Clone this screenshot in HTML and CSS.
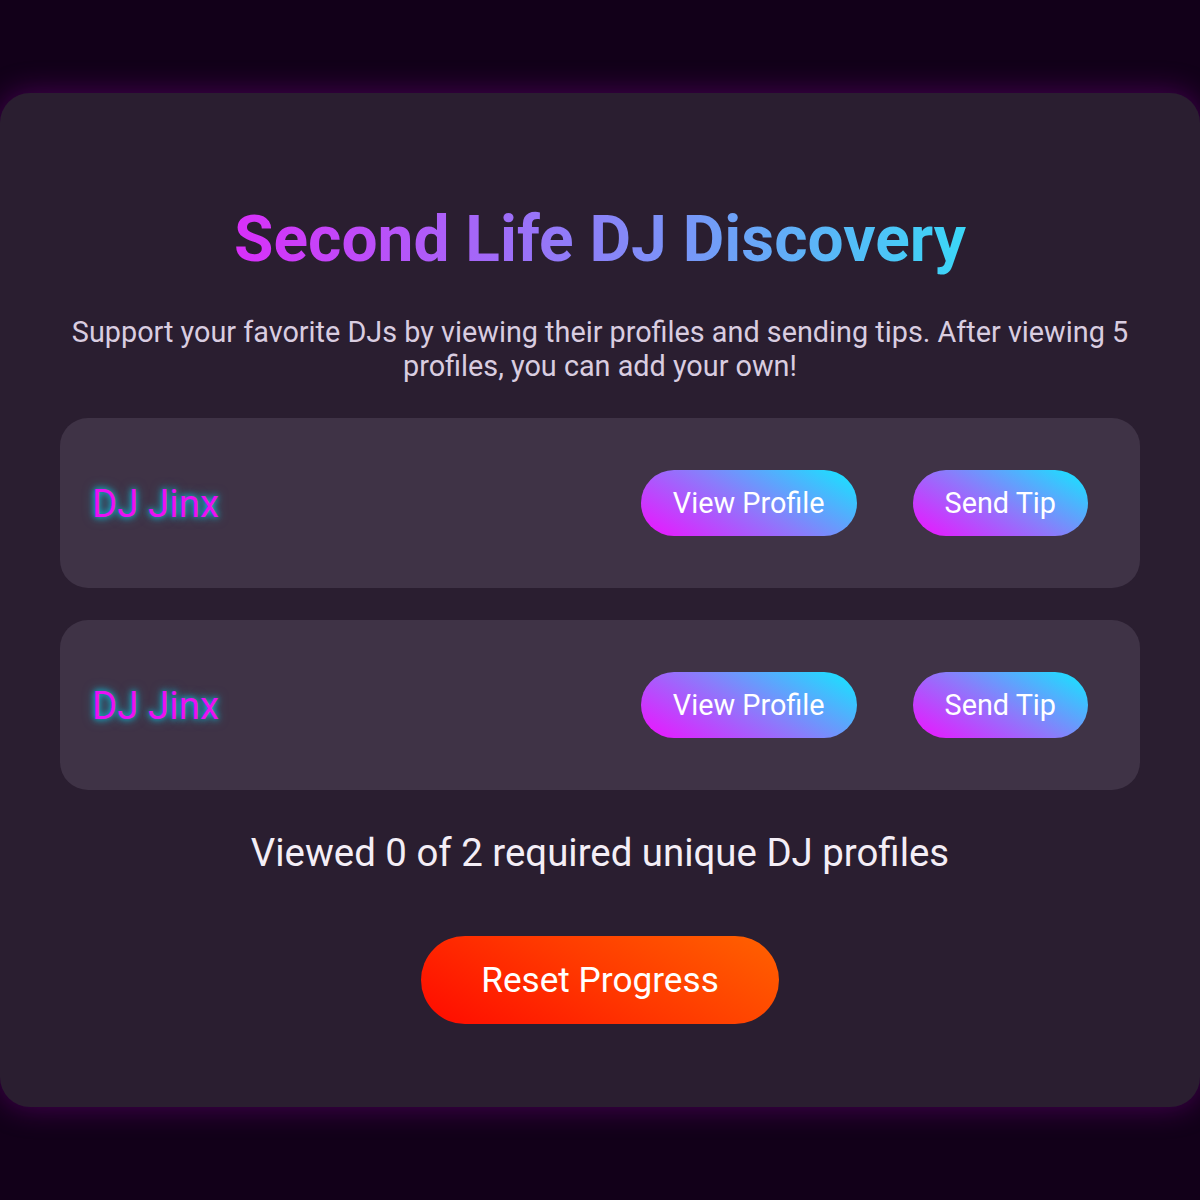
FILE: index.html
```html
<!DOCTYPE html>
<html lang="en">
<head>
<meta charset="utf-8">
<title>Second Life DJ Discovery</title>
<link rel="stylesheet" href="styles.css">
</head>
<body>
  <main class="panel">
    <h1 class="title">Second Life DJ Discovery</h1>
    <p class="intro">Support your favorite DJs by viewing their profiles and sending tips. After viewing 5 profiles, you can add your own!</p>
    <div class="dj-list">
      <div class="dj-card">
        <span class="dj-name">DJ Jinx</span>
        <div class="dj-actions">
          <button class="pill">View Profile</button>
          <button class="pill">Send Tip</button>
        </div>
      </div>
      <div class="dj-card">
        <span class="dj-name">DJ Jinx</span>
        <div class="dj-actions">
          <button class="pill">View Profile</button>
          <button class="pill">Send Tip</button>
        </div>
      </div>
    </div>
    <p class="status">Viewed 0 of 2 required unique DJ profiles</p>
    <button class="reset">Reset Progress</button>
  </main>
</body>
</html>
```
FILE: styles.css
```css
* { box-sizing: border-box; }
html, body { margin: 0; padding: 0; }
body {
  min-height: 100vh;
  display: flex;
  align-items: center;
  background: #120019;
  font-family: Roboto, "Liberation Sans", sans-serif;
  color: #fff;
}
.panel {
  width: 100%;
  background: #2a1e30;
  border-radius: 30px;
  padding: 108px 60px 83px;
  display: flex;
  flex-direction: column;
  align-items: center;
  box-shadow: 0 0 30px rgba(140, 0, 160, 0.45);
}
.title {
  margin: 0;
  font-size: 64px;
  line-height: 77px;
  font-weight: 700;
  background: linear-gradient(90deg, #d92ff9, #3bd7f7);
  -webkit-background-clip: text;
  background-clip: text;
  color: transparent;
}
.intro {
  margin: 37px 0 0;
  font-size: 28.8px;
  line-height: 34px;
  color: #d9cde0;
  text-align: center;
}
.dj-list {
  width: 100%;
  margin-top: 35px;
  display: flex;
  flex-direction: column;
  gap: 32px;
}
.dj-card {
  height: 170px;
  background: #3f3346;
  border-radius: 28px;
  padding: 0 52px 0 32px;
  display: flex;
  align-items: center;
  justify-content: space-between;
}
.dj-name {
  font-size: 38.5px;
  color: #ea10f4;
  text-shadow: 0 0 6px rgba(0, 230, 255, 0.9), 0 0 12px rgba(0, 220, 255, 0.5);
}
.dj-actions {
  display: flex;
  gap: 56px;
}
.pill {
  border: none;
  border-radius: 999px;
  height: 66px;
  padding: 0 32px;
  font-family: inherit;
  font-size: 28.8px;
  color: #fff;
  background: linear-gradient(30deg, #f010ff 0%, #8a7cfb 50%, #10eaff 100%);
}
.status {
  margin: 40px 0 0;
  font-size: 38.4px;
  line-height: 46px;
  color: #f4eef6;
}
.reset {
  margin-top: 60px;
  border: none;
  border-radius: 999px;
  height: 88px;
  padding: 0 60px;
  font-family: inherit;
  font-size: 35.2px;
  color: #fff;
  background: linear-gradient(30deg, #ff0a00 0%, #ff3800 50%, #ff6200 100%);
}
```
